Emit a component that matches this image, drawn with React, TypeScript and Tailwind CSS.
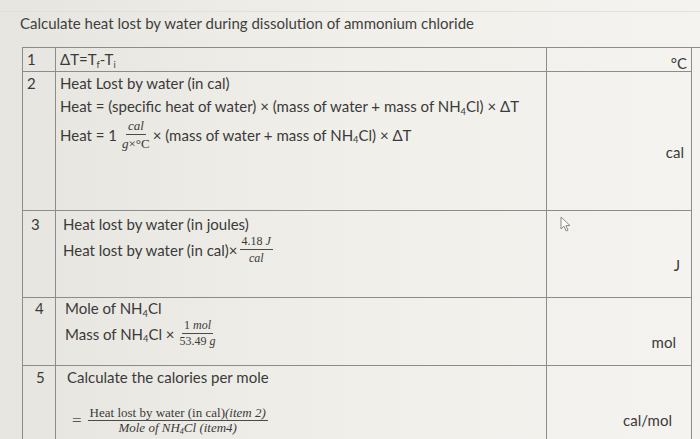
import React from "react";

function Sub({ children }: { children: React.ReactNode }) {
  return <span className="relative top-[0.3em] text-[0.62em] leading-none">{children}</span>;
}

function Frac({ num, den, cls = "" }: { num: React.ReactNode; den: React.ReactNode; cls?: string }) {
  return (
    <span className={`inline-flex flex-col items-center font-['Liberation_Serif',serif] ${cls}`}>
      <span className="border-b border-[#4a4a4a] px-[2px]">{num}</span>
      <span className="px-[2px]">{den}</span>
    </span>
  );
}

const cell = "border-r-[1.5px] border-b-[1.5px] border-[#8c8c8c]";

function Cursor() {
  return (
    <svg className="absolute left-[13px] top-[5px]" width="11" height="16" viewBox="0 0 11 16">
      <path
        d="M1 1 L1 13 L4 10.2 L6.2 15 L8 14.2 L5.9 9.6 L10 9.6 Z"
        fill="#fbfbfa"
        stroke="#8a8a8a"
        strokeWidth="1"
        strokeLinejoin="round"
      />
    </svg>
  );
}

export default function App() {
  return (
    <div className="w-[700px] h-[439px] overflow-hidden bg-gradient-to-r from-[#e7e5e0] via-[#f1efea] to-[#f5f3ef] text-[#3a3a3a] font-['Lato',sans-serif]">
      <div className="h-[12px] border-b border-[#e2e0db]" />
      <div className="pl-[20px] pt-[1px] h-[35px] text-[15px] leading-[20px] text-[#404040]">
        Calculate heat lost by water during dissolution of ammonium chloride
      </div>
      <div className="ml-[22px] grid grid-cols-[33px_491px_145px] border-l-[1.5px] border-t-[1.5px] border-[#8c8c8c] text-[15px] leading-[22px]">
        {/* row 1 */}
        <div className={`${cell} h-[24px] pl-[4px]`}>1</div>
        <div className={`${cell} h-[24px] pl-[4px]`}>
          ΔT=T<Sub>f</Sub>-T<Sub>i</Sub>
        </div>
        <div className={`${cell} h-[24px] text-right pr-[4px] pt-[7px] leading-[16px]`}>°C</div>

        {/* row 2 */}
        <div className={`${cell} h-[139px] pl-[4px]`}>2</div>
        <div className={`${cell} h-[139px] pl-[4px]`}>
          <div>Heat Lost by water (in cal)</div>
          <div className="mt-[1px]">
            Heat = (specific heat of water) × (mass of water + mass of NH<Sub>4</Sub>Cl) × ΔT
          </div>
          <div className="flex items-center">
            <span>Heat = 1</span>
            <Frac
              cls="ml-[3px] mr-[1px] text-[13px] leading-[17px]"
              num={<i>cal</i>}
              den={<span><i>g</i>×°C</span>}
            />
            <span>× (mass of water + mass of NH<Sub>4</Sub>Cl) × ΔT</span>
          </div>
        </div>
        <div className={`${cell} h-[139px] text-right pr-[7px] pt-[72px] leading-[16px]`}>cal</div>

        {/* row 3 */}
        <div className={`${cell} h-[87px] pl-[8px] pt-[2px]`}>3</div>
        <div className={`${cell} h-[87px] pl-[7px] pt-[2px]`}>
          <div>Heat lost by water (in joules)</div>
          <div className="-mt-[2px] flex items-center">
            <span>Heat lost by water (in cal)×</span>
            <Frac
              cls="ml-[2px] text-[12px] leading-[16px]"
              num={<span>4.18 <i>J</i></span>}
              den={<i>cal</i>}
            />
          </div>
        </div>
        <div className={`${cell} relative h-[87px] text-right pr-[11px] pt-[46px] leading-[16px]`}>
          <Cursor />J
        </div>

        {/* row 4 */}
        <div className={`${cell} h-[68px] pl-[12px] leading-[20px]`}>4</div>
        <div className={`${cell} h-[68px] pl-[9px]`}>
          <div className="leading-[20px]">Mole of NH<Sub>4</Sub>Cl</div>
          <div className="flex items-center">
            <span>Mass of NH<Sub>4</Sub>Cl ×</span>
            <Frac
              cls="ml-[3px] text-[12px] leading-[15px]"
              num={<span>1 <i>mol</i></span>}
              den={<span>53.49 <i>g</i></span>}
            />
          </div>
        </div>
        <div className={`${cell} h-[68px] text-right pr-[15px] pt-[36px] leading-[16px]`}>mol</div>

        {/* row 5 */}
        <div className={`${cell} h-[90px] pl-[13px]`}>5</div>
        <div className={`${cell} h-[90px] pl-[11px]`}>
          <div>Calculate the calories per mole</div>
          <div className="mt-[18px] flex items-center pl-[5px]">
            <span className="mr-[6px] text-[#555] font-['Liberation_Serif',serif] text-[17px]">=</span>
            <Frac
              cls="text-[13px] leading-[14px]"
              num={<span>Heat lost by water (in cal)<i>(item 2)</i></span>}
              den={<i>Mole of NH<Sub>4</Sub>Cl (item4)</i>}
            />
          </div>
        </div>
        <div className={`${cell} h-[90px] text-right pr-[19px] pt-[46px] leading-[16px]`}>cal/mol</div>
      </div>
    </div>
  );
}
